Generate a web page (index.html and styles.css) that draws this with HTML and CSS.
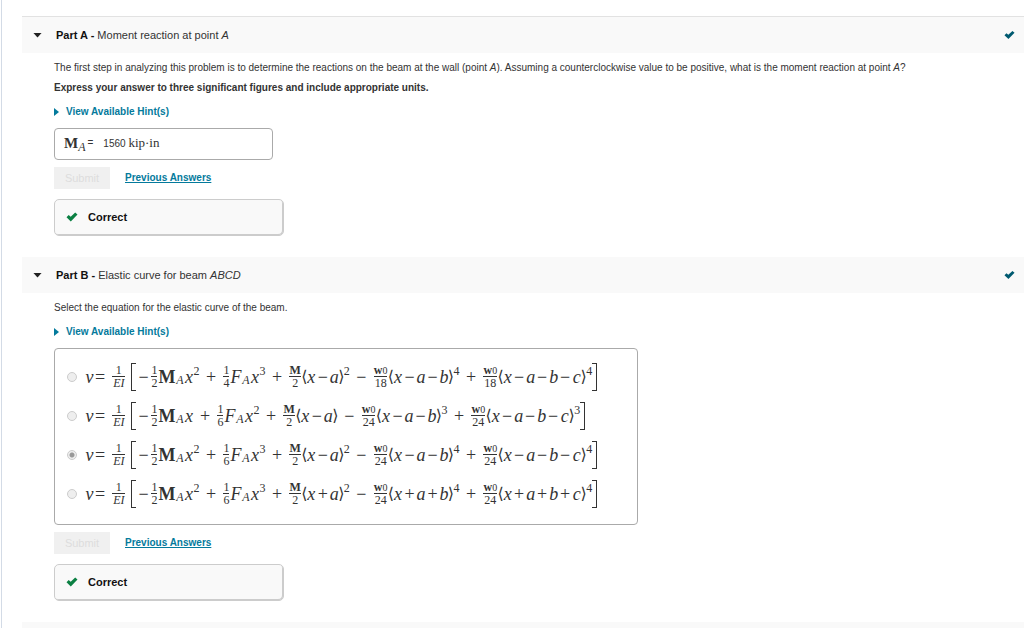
FILE: index.html
```
<!DOCTYPE html>
<html lang="en">

<head>
    <meta charset="UTF-8">
    <meta name="viewport" content="width=device-width, initial-scale=1.0">
    <title>Beam Deflection</title>
    <link rel="stylesheet" href="styles.css">
</head>

<body>
    <!-- shared check mark -->
    <svg class="defs" width="0" height="0" aria-hidden="true">
        <symbol id="check" viewBox="0 0 12 10">
            <path d="M0.5 5.2 L2.7 3 L4.7 4.8 L9.2 0.5 L11.5 2.6 L4.8 9.4 Z" />
        </symbol>
    </svg>

    <main class="container">
        <section class="part">
            <div class="header first">
                <button class="toggle" aria-label="Collapse Part A"></button>
                <h2><b>Part A -</b> Moment reaction at point <i>A</i></h2>
                <svg class="status" role="img" aria-label="Complete"><use href="#check" /></svg>
            </div>
            <div class="content">
                <p>The first step in analyzing this problem is to determine the reactions on the beam at the wall (point <i>A</i>). Assuming a counterclockwise value to be positive, what is the moment reaction at point <i>A</i>?</p>
                <p><b>Express your answer to three significant figures and include appropriate units.</b></p>
                <button class="hint">View Available Hint(s)</button>
                <div class="answer">
                    <span class="math"><b>M</b><i class="sub">A</i></span>
                    <span class="equals">=</span>
                    <output>1560 <span class="unit">kip·in</span></output>
                </div>
                <div class="actions">
                    <button class="submit" disabled>Submit</button>
                    <a href="#">Previous Answers</a>
                </div>
                <div class="feedback">
                    <svg aria-hidden="true"><use href="#check" /></svg>
                    <b>Correct</b>
                </div>
            </div>
        </section>

        <section class="part">
            <div class="header">
                <button class="toggle" aria-label="Collapse Part B"></button>
                <h2><b>Part B -</b> Elastic curve for beam <i>ABCD</i></h2>
                <svg class="status" role="img" aria-label="Complete"><use href="#check" /></svg>
            </div>
            <div class="content">
                <p>Select the equation for the elastic curve of the beam.</p>
                <button class="hint">View Available Hint(s)</button>
                <div class="choices">
                    <div class="choice">
                        <input type="radio" name="curve" id="curve1" disabled>
                        <label class="math" for="curve1">
                            <i>v</i><span class="eq">=</span>
                            <span class="frac"><span>1</span><i>EI</i></span>
                            <span class="bracket left"></span>
                            <span class="op">−</span>
                            <span class="frac"><span>1</span><span>2</span></span>
                            <b>M</b><i class="sub">A</i><i>x</i><span class="sup">2</span>
                            <span class="op wide">+</span>
                            <span class="frac"><span>1</span><span>4</span></span>
                            <i>F</i><i class="sub">A</i><i>x</i><span class="sup">3</span>
                            <span class="op wide">+</span>
                            <span class="frac"><b>M</b><span>2</span></span>
                            <span class="angle">⟨</span><i>x</i><span class="op">−</span><i>a</i><span class="angle">⟩</span><span class="sup">2</span>
                            <span class="op wide">−</span>
                            <span class="frac"><span><b>w</b><small>0</small></span><span>18</span></span>
                            <span class="angle">⟨</span><i>x</i><span class="op">−</span><i>a</i><span class="op">−</span><i>b</i><span class="angle">⟩</span><span class="sup">4</span>
                            <span class="op wide">+</span>
                            <span class="frac"><span><b>w</b><small>0</small></span><span>18</span></span>
                            <span class="angle">⟨</span><i>x</i><span class="op">−</span><i>a</i><span class="op">−</span><i>b</i><span class="op">−</span><i>c</i><span class="angle">⟩</span><span class="sup">4</span>
                            <span class="bracket right"></span>
                        </label>
                    </div>
                    <div class="choice">
                        <input type="radio" name="curve" id="curve2" disabled>
                        <label class="math" for="curve2">
                            <i>v</i><span class="eq">=</span>
                            <span class="frac"><span>1</span><i>EI</i></span>
                            <span class="bracket left"></span>
                            <span class="op">−</span>
                            <span class="frac"><span>1</span><span>2</span></span>
                            <b>M</b><i class="sub">A</i><i>x</i>
                            <span class="op wide">+</span>
                            <span class="frac"><span>1</span><span>6</span></span>
                            <i>F</i><i class="sub">A</i><i>x</i><span class="sup">2</span>
                            <span class="op wide">+</span>
                            <span class="frac"><b>M</b><span>2</span></span>
                            <span class="angle">⟨</span><i>x</i><span class="op">−</span><i>a</i><span class="angle">⟩</span>
                            <span class="op wide">−</span>
                            <span class="frac"><span><b>w</b><small>0</small></span><span>24</span></span>
                            <span class="angle">⟨</span><i>x</i><span class="op">−</span><i>a</i><span class="op">−</span><i>b</i><span class="angle">⟩</span><span class="sup">3</span>
                            <span class="op wide">+</span>
                            <span class="frac"><span><b>w</b><small>0</small></span><span>24</span></span>
                            <span class="angle">⟨</span><i>x</i><span class="op">−</span><i>a</i><span class="op">−</span><i>b</i><span class="op">−</span><i>c</i><span class="angle">⟩</span><span class="sup">3</span>
                            <span class="bracket right"></span>
                        </label>
                    </div>
                    <div class="choice">
                        <input type="radio" name="curve" id="curve3" disabled checked>
                        <label class="math" for="curve3">
                            <i>v</i><span class="eq">=</span>
                            <span class="frac"><span>1</span><i>EI</i></span>
                            <span class="bracket left"></span>
                            <span class="op">−</span>
                            <span class="frac"><span>1</span><span>2</span></span>
                            <b>M</b><i class="sub">A</i><i>x</i><span class="sup">2</span>
                            <span class="op wide">+</span>
                            <span class="frac"><span>1</span><span>6</span></span>
                            <i>F</i><i class="sub">A</i><i>x</i><span class="sup">3</span>
                            <span class="op wide">+</span>
                            <span class="frac"><b>M</b><span>2</span></span>
                            <span class="angle">⟨</span><i>x</i><span class="op">−</span><i>a</i><span class="angle">⟩</span><span class="sup">2</span>
                            <span class="op wide">−</span>
                            <span class="frac"><span><b>w</b><small>0</small></span><span>24</span></span>
                            <span class="angle">⟨</span><i>x</i><span class="op">−</span><i>a</i><span class="op">−</span><i>b</i><span class="angle">⟩</span><span class="sup">4</span>
                            <span class="op wide">+</span>
                            <span class="frac"><span><b>w</b><small>0</small></span><span>24</span></span>
                            <span class="angle">⟨</span><i>x</i><span class="op">−</span><i>a</i><span class="op">−</span><i>b</i><span class="op">−</span><i>c</i><span class="angle">⟩</span><span class="sup">4</span>
                            <span class="bracket right"></span>
                        </label>
                    </div>
                    <div class="choice">
                        <input type="radio" name="curve" id="curve4" disabled>
                        <label class="math" for="curve4">
                            <i>v</i><span class="eq">=</span>
                            <span class="frac"><span>1</span><i>EI</i></span>
                            <span class="bracket left"></span>
                            <span class="op">−</span>
                            <span class="frac"><span>1</span><span>2</span></span>
                            <b>M</b><i class="sub">A</i><i>x</i><span class="sup">2</span>
                            <span class="op wide">+</span>
                            <span class="frac"><span>1</span><span>6</span></span>
                            <i>F</i><i class="sub">A</i><i>x</i><span class="sup">3</span>
                            <span class="op wide">+</span>
                            <span class="frac"><b>M</b><span>2</span></span>
                            <span class="angle">⟨</span><i>x</i><span class="op">+</span><i>a</i><span class="angle">⟩</span><span class="sup">2</span>
                            <span class="op wide">−</span>
                            <span class="frac"><span><b>w</b><small>0</small></span><span>24</span></span>
                            <span class="angle">⟨</span><i>x</i><span class="op">+</span><i>a</i><span class="op">+</span><i>b</i><span class="angle">⟩</span><span class="sup">4</span>
                            <span class="op wide">+</span>
                            <span class="frac"><span><b>w</b><small>0</small></span><span>24</span></span>
                            <span class="angle">⟨</span><i>x</i><span class="op">+</span><i>a</i><span class="op">+</span><i>b</i><span class="op">+</span><i>c</i><span class="angle">⟩</span><span class="sup">4</span>
                            <span class="bracket right"></span>
                        </label>
                    </div>
                </div>
                <div class="actions">
                    <button class="submit" disabled>Submit</button>
                    <a href="#">Previous Answers</a>
                </div>
                <div class="feedback">
                    <svg aria-hidden="true"><use href="#check" /></svg>
                    <b>Correct</b>
                </div>
            </div>
        </section>

        <div class="next-part"></div>
    </main>
</body>

</html>
```
FILE: styles.css
```
* {
    box-sizing: border-box;
}

body {
    margin: 0;
    font-family: "Liberation Sans", Arial, sans-serif;
    font-size: 10px;
    line-height: 20px;
    color: #333;
    background-color: #fff;
}

button {
    font-family: inherit;
    font-size: 10px;
    border: 0;
    padding: 0;
}

.defs {
    position: absolute;
}

.container {
    margin-left: 1px;
    padding: 16px 0 0 20px;
    border-left: 1px solid #d3dbe6;
    min-height: 100vh;
}

.header {
    display: flex;
    align-items: center;
    height: 36px;
    padding: 0 9px 0 11px;
    background-color: #f9f9f9;
}

.header.first {
    height: 37px;
    border-top: 1px solid #e2e2e2;
}

.header h2 {
    flex: 1;
    margin: 0 0 0 14px;
    font-size: 11px;
    font-weight: normal;
}

.header b {
    color: #111;
}

.toggle {
    width: 9px;
    height: 5px;
    background-color: #222;
    clip-path: polygon(0 0, 100% 0, 50% 100%);
}

.status {
    width: 11px;
    height: 10px;
    fill: #005a70;
}

.content {
    padding: 5px 20px 21px 32px;
}

.content p {
    margin: 0;
}

.hint {
    display: flex;
    align-items: center;
    gap: 7px;
    margin: 4px 0 6px;
    background: none;
    color: #047a9c;
    font-weight: bold;
    line-height: 20px;
}

.hint::before {
    content: "";
    width: 5px;
    height: 8px;
    background-color: #047a9c;
    clip-path: polygon(0 0, 100% 50%, 0 100%);
}

.answer {
    display: flex;
    align-items: center;
    width: 219px;
    height: 32px;
    padding: 0 9px 2px;
    border: 1px solid #aaa;
    border-radius: 4px;
}

.answer .math {
    font-size: 15px;
}

.equals {
    margin: 0 10px 0 2px;
}

.unit {
    font-family: "Liberation Serif", serif;
    font-size: 13px;
}

.actions {
    display: flex;
    align-items: center;
    gap: 15px;
    margin: 7px 0 10px;
}

.submit {
    width: 56px;
    height: 22px;
    background-color: #f0f0f0;
    color: #ddd;
    font-size: 11px;
}

.actions a {
    color: #047a9c;
    font-weight: bold;
}

.feedback {
    display: flex;
    align-items: center;
    gap: 10px;
    width: 230px;
    height: 37px;
    padding: 0 11px 1px;
    background-color: #f9f9f9;
    border: 1px solid #ccc;
    border-radius: 5px;
    box-shadow: inset -1px -1px 0 #ccc;
    color: #111;
    font-size: 11px;
}

.feedback svg {
    width: 12px;
    height: 10px;
    fill: #0b8043;
}

.choices {
    max-width: 584px;
    padding: 8px 12px 11px;
    border: 1px solid #aaa;
    border-radius: 4px;
}

.choice {
    display: flex;
    align-items: center;
    gap: 8px;
    height: 39px;
}

.choice input {
    appearance: none;
    flex: none;
    width: 10px;
    height: 10px;
    margin: 0;
    border: 1px solid #ccc;
    border-radius: 50%;
    background-color: #eee;
}

.choice input:checked {
    background: radial-gradient(circle, #999 0 2px, #eee 3px);
}

/* equations */
.math {
    display: flex;
    align-items: center;
    font-family: "Liberation Serif", serif;
    font-size: 18px;
    color: #333;
}

.choice .math > i {
    min-width: 9px;
    text-align: center;
}

.math .sub,
.math .sup {
    font-size: 12px;
}

.math .sub {
    padding-top: 7px;
}

.math .sup {
    padding-bottom: 11px;
}

.eq {
    margin: 0 6px 0 1px;
}

.op {
    width: 14px;
    text-align: center;
}

.op.wide {
    width: 23px;
}

.angle {
    display: flex;
    justify-content: center;
    width: 5px;
    font-family: "DejaVu Sans", sans-serif;
    font-size: 16px;
}

.frac {
    display: flex;
    flex-direction: column;
    align-items: center;
    margin: 0 1px;
    font-size: 12px;
    line-height: 11px;
}

.frac > :first-child {
    align-self: stretch;
    border-bottom: 1px solid #333;
    text-align: center;
}

.frac > :last-child {
    padding-top: 1px;
}

.frac > i {
    padding: 0 1px;
}

.frac small {
    font-size: 10px;
}

.bracket {
    width: 5px;
    height: 28px;
    border: 1px solid #333;
}

.bracket.left {
    margin-left: 5px;
    border-right: 0;
}

.bracket.right {
    border-left: 0;
}

.next-part {
    height: 6px;
    background-color: #f9f9f9;
}
```
